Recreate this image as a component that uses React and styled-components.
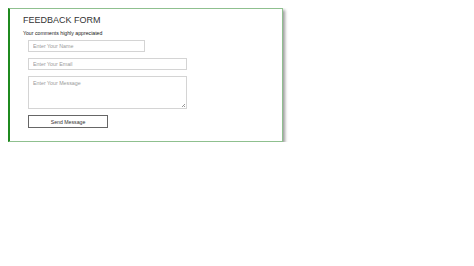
import React from 'react'
import styled, { createGlobalStyle } from 'styled-components'

const GlobalStyle = createGlobalStyle`
  * { box-sizing: border-box; }
  body {
    margin: 8px;
    background: #fff;
    font-family: "Liberation Sans", Arial, sans-serif;
  }
`

const Card = styled.div`
  width: 275px;
  height: 134px;
  border: 1px solid #8fc08f;
  border-left: 2px solid #1f8a1f;
  box-shadow: 2px 2px 3px rgba(0, 0, 0, 0.4);
  padding: 6px 12px 0 13px;
  display: flex;
  flex-direction: column;
`

const Title = styled.h2`
  margin: 0;
  font-size: 9px;
  line-height: 11px;
  font-weight: normal;
  color: #333;
`

const Subtitle = styled.p`
  margin: 4px 0 0;
  font-size: 5.2px;
  line-height: 7px;
  color: #222;
`

const Form = styled.form`
  display: flex;
  flex-direction: column;
  align-items: flex-start;
  gap: 6px;
  margin: 3px 0 0 5px;
`

const Field = styled.input`
  width: ${p => p.$w}px;
  height: 12px;
  border: 1px solid #d4d4d4;
  padding: 0 4px;
  font-family: inherit;
  font-size: 5.3px;
  outline: none;
  &::placeholder { color: #9a9a9a; }
`

const AreaWrap = styled.div`
  position: relative;
  width: 159px;
  height: 33px;
`

const Area = styled.textarea`
  display: block;
  width: 100%;
  height: 100%;
  border: 1px solid #d4d4d4;
  padding: 3px 4px;
  font-family: inherit;
  font-size: 5.3px;
  resize: none;
  outline: none;
  &::placeholder { color: #9a9a9a; }
`

const Grip = styled.span`
  position: absolute;
  right: 2px;
  bottom: 2px;
  width: 3px;
  height: 3px;
  background: linear-gradient(135deg, transparent 45%, #999 45%, #999 60%, transparent 60%, transparent 75%, #999 75%);
  pointer-events: none;
`

const Button = styled.button`
  width: 80px;
  height: 13px;
  border: 1px solid #666;
  background: #fff;
  font-family: inherit;
  font-size: 5.2px;
  color: #333;
  padding: 0;
  cursor: pointer;
`

const App = () => {
  return (
    <>
      <GlobalStyle />
      <Card>
        <Title>FEEDBACK FORM</Title>
        <Subtitle>Your comments highly appreciated</Subtitle>
        <Form onSubmit={e => e.preventDefault()}>
          <Field $w={117} type="text" placeholder="Enter Your Name" />
          <Field $w={159} type="email" placeholder="Enter Your Email" />
          <AreaWrap>
            <Area placeholder="Enter Your Message" />
            <Grip />
          </AreaWrap>
          <Button type="submit">Send Message</Button>
        </Form>
      </Card>
    </>
  )
}

export default App
